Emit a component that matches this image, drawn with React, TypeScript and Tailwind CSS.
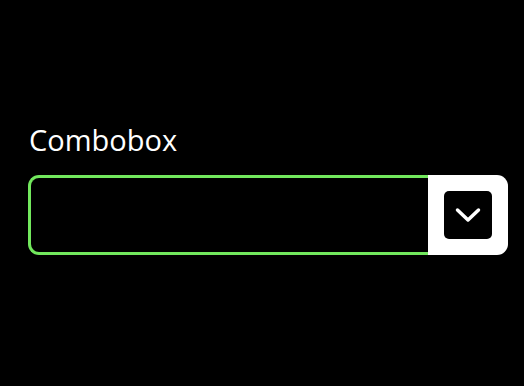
export default function App() {
  return (
    <div className="min-h-screen w-full bg-black px-[28px] pt-[120px]" style={{ fontFamily: '"Open Sans", "Noto Sans", sans-serif' }}>
      <label htmlFor="combo" className="block h-[40px] pl-[1px] text-[29px] leading-[40px] text-white">
        Combobox
      </label>
      <div className="mt-[15px] flex h-[80px] w-[480px]">
        <input
          id="combo"
          type="text"
          className="h-full flex-1 rounded-l-[11px] border-[3px] border-r-0 border-[#72e85d] bg-black px-4 text-[28px] text-white outline-none"
        />
        <button
          type="button"
          aria-label="Show suggestions"
          className="flex h-full w-[80px] items-center justify-center rounded-r-[11px] bg-white"
        >
          <span className="flex h-[48px] w-[48px] items-center justify-center rounded-[5px] bg-black">
            <svg width="26" height="16" viewBox="0 0 26 16" fill="none">
              <path d="M2.5 3 L13 13 L23.5 3" stroke="white" strokeWidth="3.5" strokeLinecap="round" strokeLinejoin="round" />
            </svg>
          </span>
        </button>
      </div>
    </div>
  )
}
